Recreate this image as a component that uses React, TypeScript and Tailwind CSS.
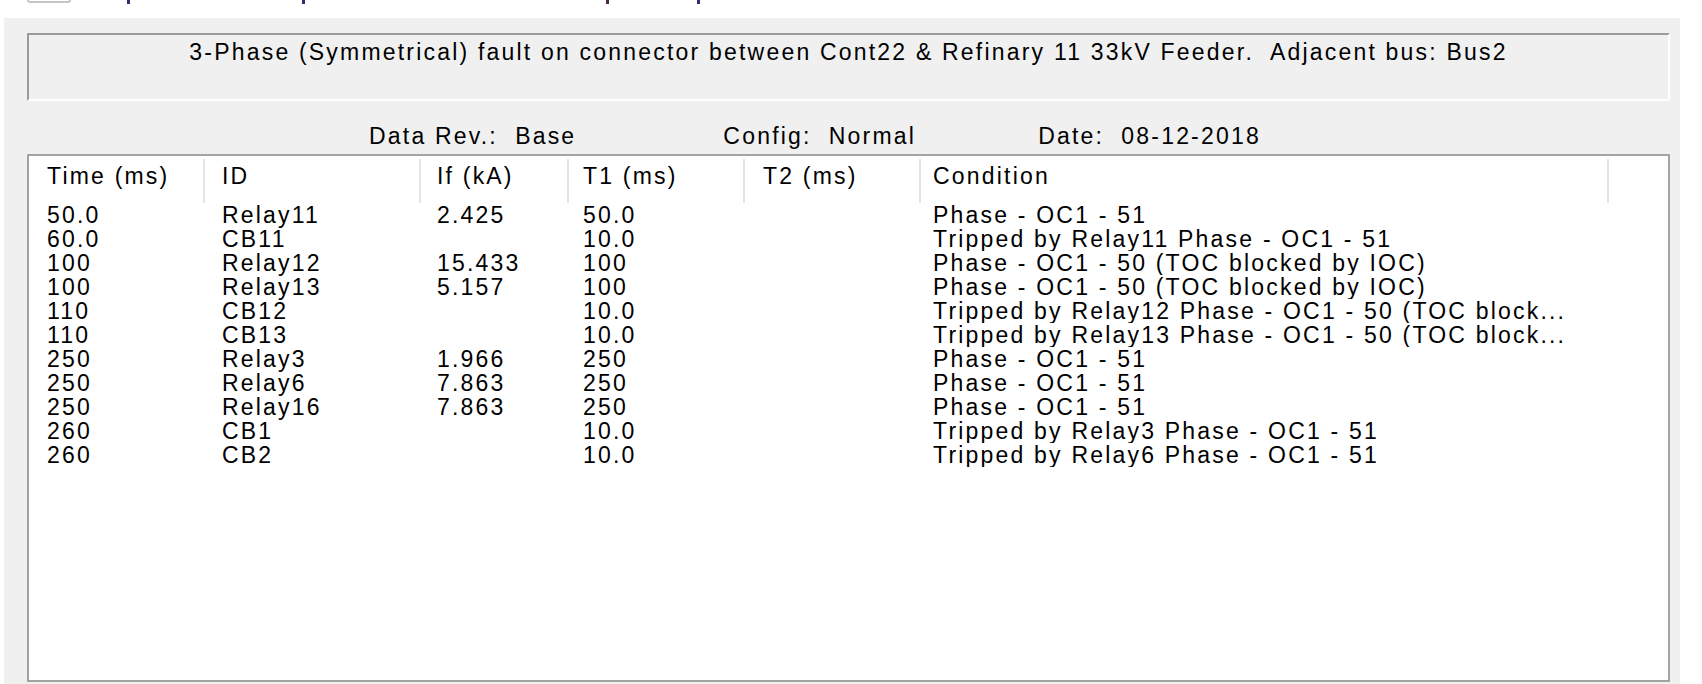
import React from "react";

type Row = {
  time: string;
  id: string;
  ifka: string;
  t1: string;
  t2: string;
  condition: string;
};

const rows: Row[] = [
  { time: "50.0", id: "Relay11", ifka: "2.425", t1: "50.0", t2: "", condition: "Phase - OC1 - 51" },
  { time: "60.0", id: "CB11", ifka: "", t1: "10.0", t2: "", condition: "Tripped by Relay11 Phase - OC1 - 51" },
  { time: "100", id: "Relay12", ifka: "15.433", t1: "100", t2: "", condition: "Phase - OC1 - 50 (TOC blocked by IOC)" },
  { time: "100", id: "Relay13", ifka: "5.157", t1: "100", t2: "", condition: "Phase - OC1 - 50 (TOC blocked by IOC)" },
  { time: "110", id: "CB12", ifka: "", t1: "10.0", t2: "", condition: "Tripped by Relay12 Phase - OC1 - 50 (TOC block..." },
  { time: "110", id: "CB13", ifka: "", t1: "10.0", t2: "", condition: "Tripped by Relay13 Phase - OC1 - 50 (TOC block..." },
  { time: "250", id: "Relay3", ifka: "1.966", t1: "250", t2: "", condition: "Phase - OC1 - 51" },
  { time: "250", id: "Relay6", ifka: "7.863", t1: "250", t2: "", condition: "Phase - OC1 - 51" },
  { time: "250", id: "Relay16", ifka: "7.863", t1: "250", t2: "", condition: "Phase - OC1 - 51" },
  { time: "260", id: "CB1", ifka: "", t1: "10.0", t2: "", condition: "Tripped by Relay3 Phase - OC1 - 51" },
  { time: "260", id: "CB2", ifka: "", t1: "10.0", t2: "", condition: "Tripped by Relay6 Phase - OC1 - 51" },
];

// column widths in px (inside the list border)
const colClass = [
  "w-[176px] pl-[18px]",
  "w-[216px] pl-[17px]",
  "w-[148px] pl-[16px]",
  "w-[176px] pl-[14px]",
  "w-[176px] pl-[18px]",
  "w-[688px] pl-[12px]",
];

const headers = ["Time (ms)", "ID", "If (kA)", "T1 (ms)", "T2 (ms)", "Condition"];

export default function App() {
  return (
    <div className="w-[1702px] h-[684px] bg-white overflow-hidden font-['Liberation_Sans',Arial,sans-serif] text-[23px] tracking-[2.2px] text-black">
      {/* cut-off toolbar strip above the panel */}
      <div className="relative h-[18px]">
        <div className="absolute left-[27px] top-[-10px] w-[44px] h-[13px] rounded-[3px] border-2 border-[#c4c4c4] bg-white" />
        <div className="absolute left-[127px] top-0 w-[3px] h-[4px] bg-[#3b2a6b]" />
        <div className="absolute left-[302px] top-0 w-[3px] h-[4px] bg-[#3b2a6b]" />
        <div className="absolute left-[606px] top-0 w-[3px] h-[4px] bg-[#4a2a4a]" />
        <div className="absolute left-[697px] top-0 w-[3px] h-[4px] bg-[#3b2a6b]" />
      </div>

      <div className="ml-[4px] w-[1676px] h-[666px] bg-[#f0f0f0] pl-[23px] pr-[10px] pt-[15px]">
        {/* fault description box */}
        <div className="h-[68px] border-2 border-t-[#9b9b9b] border-l-[#9b9b9b] border-b-white border-r-white pt-[4px] text-center leading-[26px]">
          3-Phase (Symmetrical) fault on connector between Cont22 &amp; Refinary 11 33kV Feeder.&nbsp; Adjacent bus: Bus2
        </div>

        {/* info line */}
        <div className="flex h-[53px] pt-[22px] leading-[26px] whitespace-pre">
          <div className="ml-[342px]">Data Rev.:  Base</div>
          <div className="ml-[147px]">Config:  Normal</div>
          <div className="ml-[122px]">Date:  08-12-2018</div>
        </div>

        {/* results list view */}
        <div className="h-[528px] bg-white border-2 border-[#a3a3a3] whitespace-nowrap">
          <div className="flex h-[47px] pt-[3px]">
            {headers.map((h, i) => (
              <div
                key={h}
                className={`${colClass[i]} h-[44px] pt-[4px] leading-[26px] border-r-2 border-[#e5e5e5]`}
              >
                {h}
              </div>
            ))}
          </div>
          {rows.map((r, idx) => (
            <div key={idx} className="flex h-[24px] leading-[24px]">
              <div className={colClass[0]}>{r.time}</div>
              <div className={colClass[1]}>{r.id}</div>
              <div className={colClass[2]}>{r.ifka}</div>
              <div className={colClass[3]}>{r.t1}</div>
              <div className={colClass[4]}>{r.t2}</div>
              <div className={`${colClass[5]} overflow-hidden`}>{r.condition}</div>
            </div>
          ))}
        </div>
      </div>
    </div>
  );
}
